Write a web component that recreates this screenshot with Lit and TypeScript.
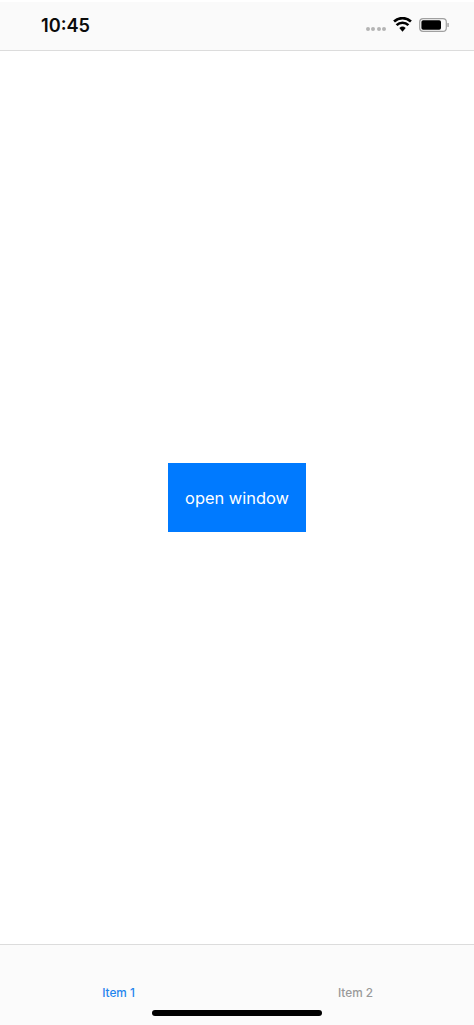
import { LitElement, html, css } from "lit";
import { customElement } from "lit/decorators.js";

@customElement("app-root")
export class AppRoot extends LitElement {
  static styles = css`
    :host {
      display: flex;
      flex-direction: column;
      width: 474px;
      height: 1025px;
      background: #fff;
      font-family: Inter, "Liberation Sans", sans-serif;
      overflow: hidden;
      position: relative;
    }
    .status {
      height: 50px;
      flex: none;
      background: linear-gradient(#fff 0 2px, #fafafa 2px);
      border-bottom: 1px solid #dcdcdc;
      display: flex;
      align-items: center;
      padding: 0 25px 0 41px;
      box-sizing: content-box;
    }
    .time {
      font-size: 18.2px;
      font-weight: 600;
      color: #0b0b0b;
      line-height: 22px;
      margin-bottom: 1px;
    }
    .spacer { flex: 1; }
    .dots {
      display: flex;
      gap: 1.5px;
      margin-top: 7px;
      margin-right: 7px;
    }
    .dots i {
      width: 4px;
      height: 4px;
      border-radius: 50%;
      background: #b4b4b4;
    }
    .wifi { display: block; margin-right: 7px; margin-bottom: 1px; }
    .battery { display: block; margin-bottom: 1px; }
    .main {
      flex: 1;
      display: flex;
      align-items: center;
      justify-content: center;
    }
    .btn {
      width: 138px;
      height: 69px;
      background: #007aff;
      color: #fff;
      font-size: 16.4px;
      font-weight: 400;
      display: flex;
      align-items: center;
      justify-content: center;
    }
    .tabs {
      flex: none;
      background: #fbfbfb;
      border-top: 1px solid #dcdcdc;
      display: flex;
      padding-top: 41px;
      box-sizing: border-box;
      height: 81px;
    }
    .tab {
      flex: 1;
      text-align: center;
      font-size: 11.8px;
      font-weight: 500;
      line-height: 14px;
      color: #999;
    }
    .tab.active { color: #1f85ee; }
    .home {
      position: absolute;
      left: 152px;
      bottom: 9px;
      width: 170px;
      height: 6px;
      border-radius: 3px;
      background: #000;
    }
  `;

  render() {
    return html`
      <div class="status">
        <span class="time">10:45</span>
        <span class="spacer"></span>
        <span class="dots"><i></i><i></i><i></i><i></i></span>
        <svg class="wifi" width="19" height="15" viewBox="0 0 18 14">
          <path d="M9 13.8 6 10.4a4.4 4.4 0 0 1 6 0Z" fill="#000" />
          <path d="M3.4 7.6a8 8 0 0 1 11.2 0" fill="none" stroke="#000" stroke-width="2.5" />
          <path d="M1 4.1a11.8 11.8 0 0 1 16 0" fill="none" stroke="#000" stroke-width="2.5" />
        </svg>
        <svg class="battery" width="30" height="14" viewBox="0 0 30 14">
          <rect x=".7" y=".7" width="26.6" height="12.6" rx="3.4" fill="none" stroke="#a0a0a0" stroke-width="1.2" />
          <rect x="2.4" y="2.2" width="19.6" height="9.6" rx="1.8" fill="#000" />
          <rect x="28.4" y="5" width="1.3" height="4" rx=".6" fill="#999" />
        </svg>
      </div>
      <div class="main"><div class="btn">open window</div></div>
      <div class="tabs">
        <div class="tab active">Item 1</div>
        <div class="tab">Item 2</div>
      </div>
      <div class="home"></div>
    `;
  }
}
